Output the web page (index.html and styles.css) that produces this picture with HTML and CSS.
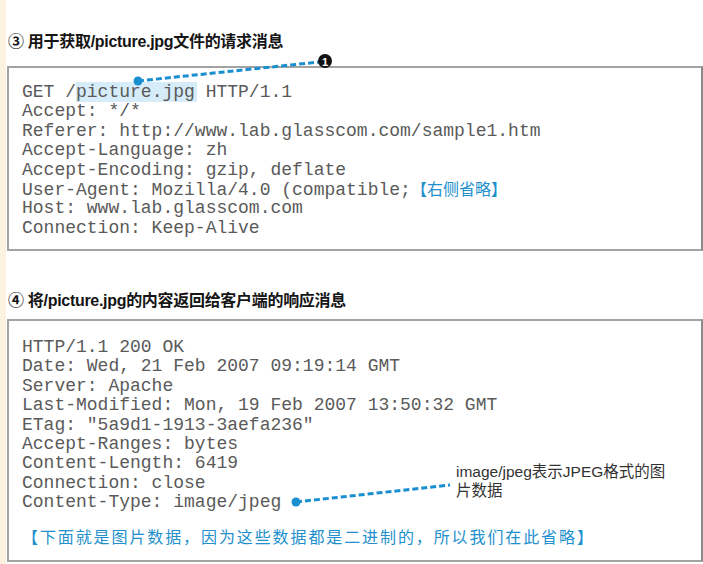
FILE: index.html
```html
<!DOCTYPE html>
<html lang="zh">
<head>
<meta charset="utf-8">
<link rel="stylesheet" href="styles.css">
</head>
<body>
<div class="page">
  <div class="strip"></div>
  <main class="content">
    <h2 class="title t1">③ 用于获取/picture.jpg文件的请求消息</h2>
    <section class="box box1">
      <div class="code">
        <div class="ln">GET /<span class="hl">picture.jpg</span> HTTP/1.1</div>
        <div class="ln">Accept: */*</div>
        <div class="ln">Referer: http://www.lab.glasscom.com/sample1.htm</div>
        <div class="ln">Accept-Language: zh</div>
        <div class="ln">Accept-Encoding: gzip, deflate</div>
        <div class="ln">User-Agent: Mozilla/4.0 (compatible;<span class="note">【右侧省略】</span></div>
        <div class="ln">Host: www.lab.glasscom.com</div>
        <div class="ln">Connection: Keep-Alive</div>
      </div>
      <svg class="overlay" width="340" height="40" viewBox="0 -20 340 40">
        <line x1="131" y1="16" x2="312" y2="-3" class="dash"/>
        <circle cx="131" cy="16" r="4.5" class="dot"/>
        <circle cx="318" cy="-4" r="7" fill="#111"/>
        <text x="318" y="0.5" class="num">1</text>
      </svg>
    </section>
    <h2 class="title t2">④ 将/picture.jpg的内容返回给客户端的响应消息</h2>
    <section class="box box2">
      <div class="code">
        <div class="ln">HTTP/1.1 200 OK</div>
        <div class="ln">Date: Wed, 21 Feb 2007 09:19:14 GMT</div>
        <div class="ln">Server: Apache</div>
        <div class="ln">Last-Modified: Mon, 19 Feb 2007 13:50:32 GMT</div>
        <div class="ln">ETag: "5a9d1-1913-3aefa236"</div>
        <div class="ln">Accept-Ranges: bytes</div>
        <div class="ln">Content-Length: 6419</div>
        <div class="ln">Connection: close</div>
        <div class="ln">Content-Type: image/jpeg</div>
      </div>
      <p class="omit">【下面就是图片数据，因为这些数据都是二进制的，所以我们在此省略】</p>
      <svg class="overlay o2" width="460" height="200" viewBox="0 0 460 200">
        <line x1="289" y1="183" x2="443" y2="166" class="dash"/>
        <circle cx="289" cy="183" r="4.5" class="dot"/>
      </svg>
      <div class="callout">image/jpeg表示JPEG格式的图片数据</div>
    </section>
  </main>
</div>
</body>
</html>
```
FILE: styles.css
```css
* { box-sizing: border-box; }
html, body { margin: 0; padding: 0; background: #fff; }
.page {
  display: flex;
  width: 703px;
  height: 564px;
  overflow: hidden;
}
.strip {
  width: 6px;
  flex: none;
  background: #fdf2e2;
}
.content {
  flex: 1;
  padding-left: 1px;
}
.title {
  margin: 0;
  font-family: "Liberation Sans", "Noto Sans CJK SC", sans-serif;
  font-weight: bold;
  font-size: 16px;
  line-height: 20px;
  color: #151515;
  padding-left: 1px;
  letter-spacing: -0.3px;
}
.t1 { margin-top: 32px; margin-bottom: 14px; }
.t2 { margin-top: 40px; margin-bottom: 8px; }
.box {
  position: relative;
  width: 696px;
  border: 2px solid #a3a3a3;
  border-right-color: #8a8a8a;
  padding-left: 13px;
}
.box1 { height: 185px; padding-top: 15px; }
.box2 { height: 243px; padding-top: 17px; }
.code {
  font-family: "Liberation Mono", "Noto Sans CJK SC", monospace;
  font-size: 18px;
  line-height: 19.4px;
  color: #5a5a5a;
}
.ln { white-space: pre; height: 19.4px; }
.hl {
  background: #d6ecf8;
  box-shadow: 2px 0 0 #d6ecf8;
}
.note {
  font-family: "Noto Sans CJK SC", sans-serif;
  font-size: 16px;
  line-height: 16px;
  color: #2290cc;
}
.omit {
  margin: 13px 0 0 0;
  font-family: "Noto Sans CJK SC", sans-serif;
  font-size: 16px;
  line-height: 20px;
  letter-spacing: 1.9px;
  color: #2290cc;
}
.overlay {
  position: absolute;
  left: -2px;
  top: -23px;
  overflow: visible;
}
.o2 { top: -2px; }
.dash {
  stroke: #1a8fd0;
  stroke-width: 3;
  stroke-dasharray: 6 3;
}
.dot { fill: #1a8fd0; }
.num {
  fill: #fff;
  font-family: "Liberation Sans", sans-serif;
  font-weight: bold;
  font-size: 11px;
  text-anchor: middle;
}
.callout {
  position: absolute;
  left: 447px;
  top: 141px;
  width: 212px;
  font-family: "Liberation Sans", "Noto Sans CJK SC", sans-serif;
  font-size: 15.5px;
  line-height: 19px;
  color: #333;
}
```
